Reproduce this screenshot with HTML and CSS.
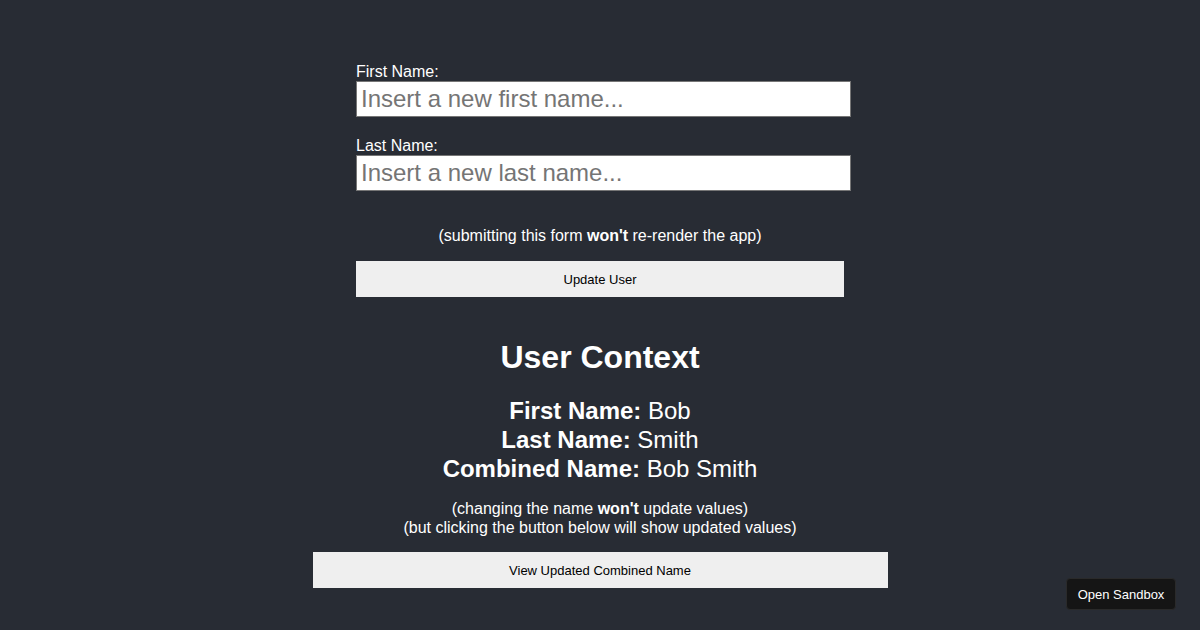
FILE: index.html
```html
<!DOCTYPE html>
<html lang="en">
<head>
  <meta charset="UTF-8">
  <meta name="viewport" content="width=device-width, initial-scale=1.0">
  <title>User Context</title>
  <link rel="stylesheet" href="styles.css">
</head>
<body>
  <div class="app">
    <form class="user-form">
      <label class="field">
        <span class="field-label">First Name:</span>
        <input type="text" placeholder="Insert a new first name...">
      </label>
      <label class="field">
        <span class="field-label">Last Name:</span>
        <input type="text" placeholder="Insert a new last name...">
      </label>
      <p class="note">(submitting this form <strong>won't</strong> re-render the app)</p>
      <button type="button" class="btn btn-update">Update User</button>
    </form>

    <div class="context">
      <h2>User Context</h2>
      <div class="values">
        <div><strong>First Name:</strong> Bob</div>
        <div><strong>Last Name:</strong> Smith</div>
        <div><strong>Combined Name:</strong> Bob Smith</div>
      </div>
      <p class="note">(changing the name <strong>won't</strong> update values)<br>(but clicking the button below will show updated values)</p>
      <button type="button" class="btn btn-view">View Updated Combined Name</button>
    </div>
  </div>

  <button class="sandbox">Open Sandbox</button>
</body>
</html>
```

FILE: styles.css
```css
body {
  margin: 0;
  background-color: #282c34;
  color: #ffffff;
  font-family: "Liberation Sans", Arial, sans-serif;
  height: 630px;
  overflow: hidden;
}
.app {
  display: flex;
  flex-direction: column;
  align-items: center;
  padding-top: 63px;
}
.user-form {
  width: 488px;
  display: flex;
  flex-direction: column;
}
.field {
  display: flex;
  flex-direction: column;
  margin-bottom: 20px;
}
.field-label {
  font-size: 16px;
  line-height: 18px;
}
.field input {
  width: 495px;
  height: 36px;
  box-sizing: border-box;
  margin: 0;
  border: 1px solid #767676;
  padding: 0 4px;
  font-family: inherit;
  font-size: 24px;
  color: #000;
  background: #fff;
  outline: none;
}
.field input::placeholder {
  color: #757575;
}
.note {
  margin: 0;
  font-size: 16px;
  line-height: 19px;
  text-align: center;
}
.user-form .note {
  margin-top: 15px;
}
.btn {
  margin-top: 16px;
  height: 36px;
  border: none;
  background-color: #efefef;
  color: #000;
  font-family: inherit;
  font-size: 13px;
  cursor: pointer;
}
.btn-update {
  width: 488px;
}
.context {
  display: flex;
  flex-direction: column;
  align-items: center;
  margin-top: 42px;
}
.context h2 {
  margin: 0;
  font-size: 32px;
  line-height: 37px;
}
.values {
  margin: 20px 0 16px;
  font-size: 24px;
  line-height: 29px;
  text-align: center;
}
.btn-view {
  width: 575px;
  margin-top: 15px;
}

/* Sandbox-Button */
.sandbox {
  position: fixed;
  right: 24px;
  bottom: 20px;
  width: 110px;
  height: 32px;
  background-color: #151515;
  color: #ffffff;
  border: 1px solid #2a2a2a;
  border-radius: 4px;
  font-family: inherit;
  font-size: 13px;
  cursor: pointer;
}
```
